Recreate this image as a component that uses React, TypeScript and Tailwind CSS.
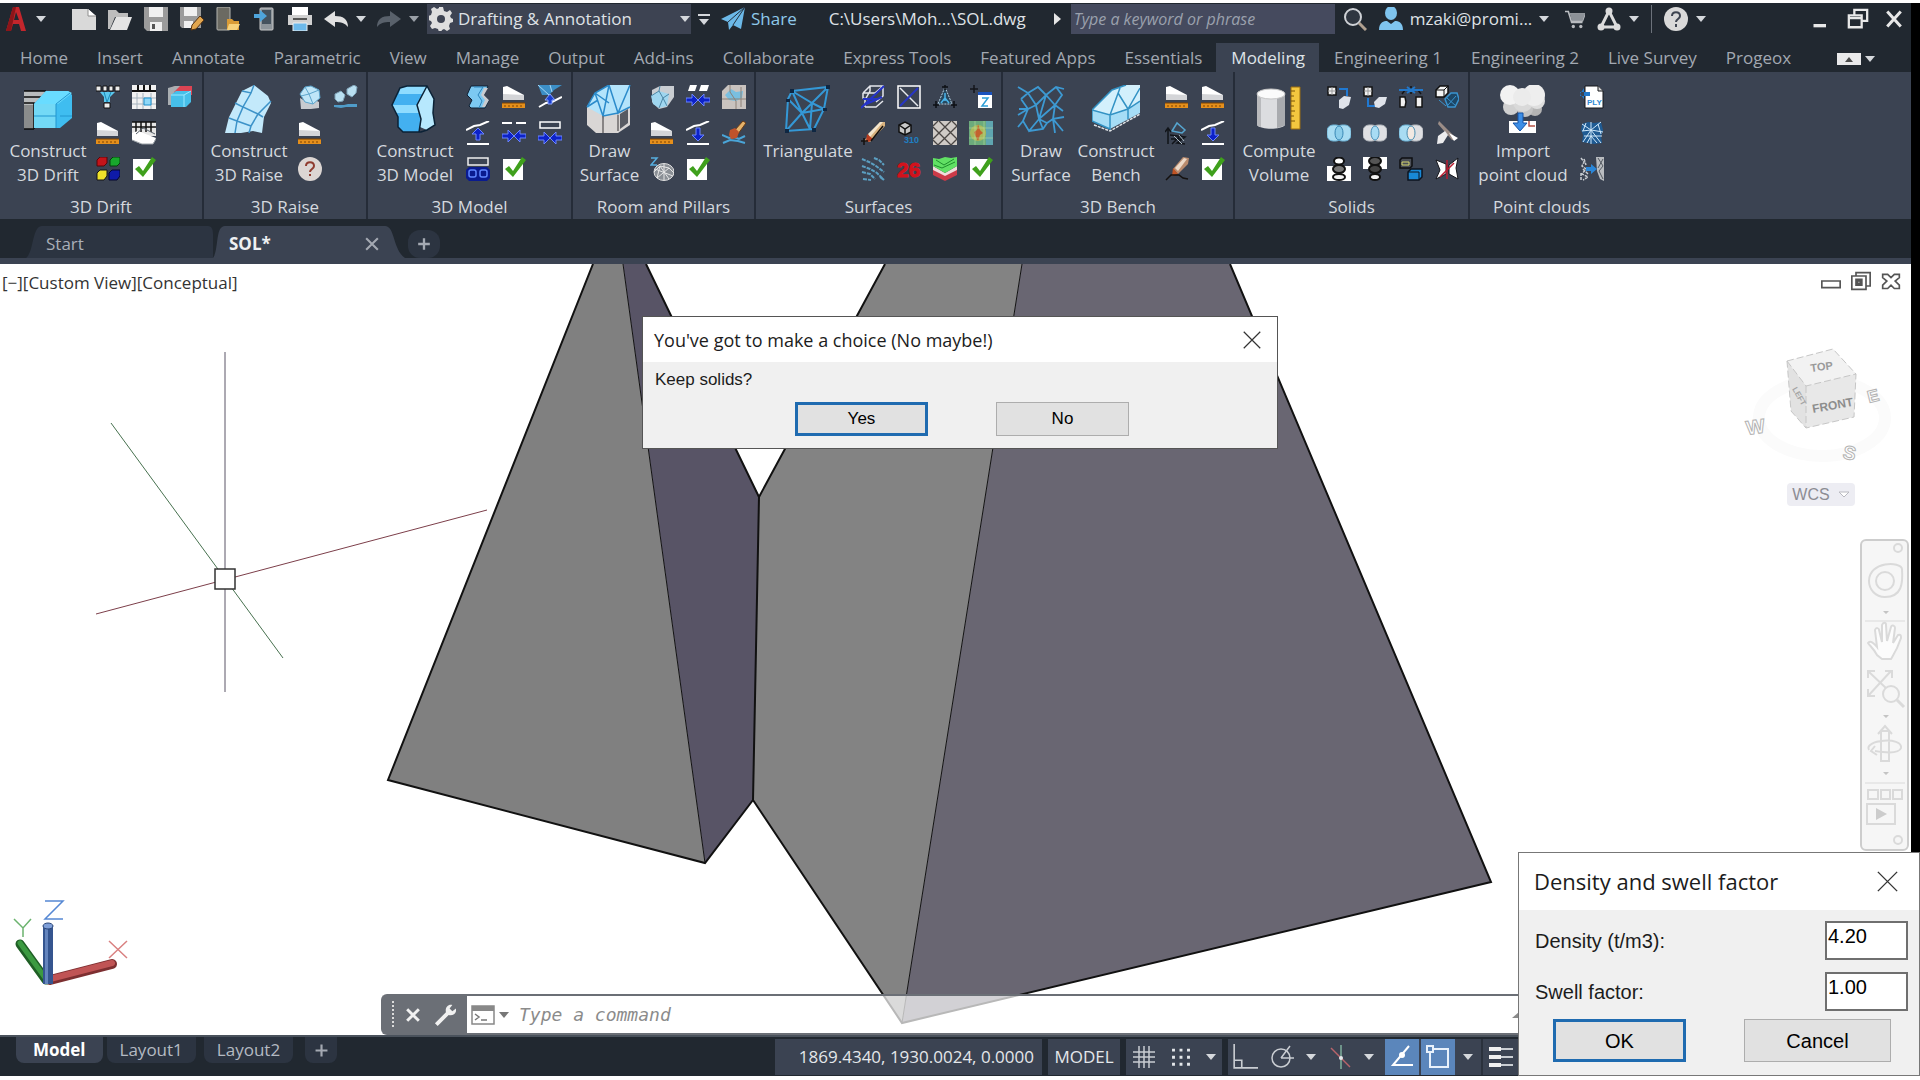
import type { ReactNode } from 'react';

const Svg = ({ children, size = 24, box = 24 }: { children: ReactNode; size?: number; box?: number }) => (
  <svg width={size} height={size} viewBox={`0 0 ${box} ${box}`} fill="none" aria-hidden="true" className="block shrink-0">
    {children}
  </svg>
);

const Caret = ({ className = 'text-[#d5d8dc]' }: { className?: string }) => (
  <svg width="10" height="6" viewBox="0 0 10 6" aria-hidden="true" className={`block shrink-0 ${className}`}>
    <path d="M0 0h10L5 6z" fill="currentColor" />
  </svg>
);

/* ---------- small ribbon icons (24 x 24) ---------- */

const eraser = (
  <>
    <path d="M1 2l4-1 17 9v5H1z" fill="#fff" />
    <path d="M1 9l21 1v5H1z" fill="#d4d5d8" />
    <path d="M0 18h23v5H0z" fill="#e58f1b" />
    <path d="M0 18h23M3 20v2M7 20v2M11 20v2M15 20v2M19 20v2" stroke="#7a4305" />
  </>
);

const check = (
  <>
    <path d="M1 2h20v21H1z" fill="#fff" />
    <path d="M3 12l4-3 4 5L20 0l4 3-13 17z" fill="#3fa01c" />
  </>
);

const arrowUp = (
  <>
    <path d="M0 9l8-4 6-1 9-4M1 23h22" stroke="#fff" strokeWidth="2" />
    <path d="M12 7l6 6h-4v6h-4v-6H6z" fill="#0d22c8" stroke="#6c86ff" />
  </>
);

const arrowDown = (
  <>
    <path d="M0 9l8-4 6-1 9-4M1 23h22" stroke="#fff" strokeWidth="2" />
    <path d="M12 20l6-6h-4V7h-4v7H6z" fill="#0d22c8" stroke="#6c86ff" />
  </>
);

const arrowsIn = (
  <path d="M12 15l-6-6v4H0v4h6v4zM12 15l6-6v4h6v4h-6v4z" fill="#0d22c8" stroke="#6c86ff" />
);

const icons: Record<string, ReactNode> = {
  eraser,
  check,
  arrowUp,
  arrowDown,
  tee: (
    <>
      <path d="M0 1h5v5H0zM7 1h4v5H7zM13 1h4v5h-4zM19 1h5v5h-5zM8 18h6v5H8z" fill="#ececec" stroke="#111" />
      <path d="M4 7h15l-5 5v5H8v-5z" fill="#5cc9ee" />
      <path d="M8 7l3 10 4-10" stroke="#1d89b6" />
    </>
  ),
  grid: (
    <>
      <path d="M0 0h24v24H0z" fill="#f1f1f1" />
      <path d="M0 6h24M6 0v6M12 0v6M18 0v6" stroke="#111" strokeWidth="2" />
      <path d="M0 13h24M0 19h24M5 8v16M11 8v16M19 8v16" stroke="#a5b2bd" />
      <path d="M12 13h7v7h-7z" fill="#8fd8f7" stroke="#1c90cc" />
    </>
  ),
  boxRed: (
    <>
      <path d="M0 4l7-3h17v9H0z" fill="#dc4453" />
      <path d="M0 3l7-2h5L6 7v13H0z" fill="#a9aeb2" />
      <path d="M3 10l5-4h15v11l-5 5H3z" fill="#46bfe9" />
      <path d="M3 10h13v12M16 10l7-4" stroke="#9be8ff" />
    </>
  ),
  gridEraser: (
    <>
      <path d="M0 1h24v14H0z" fill="#e6e6e6" />
      <path d="M0 6h24M4 1v10M9 1v10M14 1v10M19 1v10M0 1h24" stroke="#111" strokeWidth="1.5" />
      <path d="M0 12l6-2 18 7-3 6H9L0 19z" fill="#fff" />
      <path d="M4 13l7-6 12 6" stroke="#59626c" />
      <path d="M0 19l10 4h11l3-5" stroke="#9aa0a6" />
    </>
  ),
  cubes: (
    <>
      <path d="M1 3l3-3h7v6L8 9H1z" fill="#c4141a" stroke="#5b0508" />
      <path d="M14 3l3-3h7v6l-3 3h-7z" fill="#18a82c" stroke="#053f0c" />
      <path d="M1 16l3-3h7v6l-3 4H1z" fill="#f0e22a" stroke="#141414" />
      <path d="M13 16l3-3h8v6l-3 4h-8z" fill="#0e1aa8" stroke="#04072f" />
    </>
  ),
  crystal: (
    <>
      <path d="M2 13l7 4 8-2 4 2v6l-8 1H3z" fill="#c8cbd0" />
      <path d="M2 9l5-7 6-1 8 4 1 8-7 6-8-2z" fill="#bfe6f8" stroke="#5da5cc" />
      <path d="M7 2l4 7 10-4M11 9l-8 2M11 9l4 10" stroke="#5da5cc" />
    </>
  ),
  rocks: (
    <>
      <path d="M1 9l6-3 4 4-2 6-5 1-3-3zM13 4l7-4 3 2-1 6-4 4-5-3z" fill="#b9dff1" stroke="#7fa3b8" />
      <path d="M0 20h10l4-1h9v3H12l-5 1-7-1z" fill="#4f9cc9" />
    </>
  ),
  help: (
    <>
      <circle cx="12" cy="12" r="12" fill="#dcd6d3" />
      <path d="M8 9c0-5 8-5 8 0 0 3-4 3-4 6M12 17v2" stroke="#8f3b2e" strokeWidth="2" />
    </>
  ),
  wave: (
    <>
      <path d="M5 1h17l-4 9 5 5-4 8H5l-2-2 3-6-5-5z" fill="#7cc9f2" stroke="#0d1f33" />
      <path d="M8 2h9l-5 8 4 6-3 7" stroke="#2c84bb" />
      <path d="M18 3h4l-4 7 5 5-4 7h-3l3-7-4-5z" fill="#c9ccd0" />
    </>
  ),
  terrainUp: (
    <>
      <path d="M0 0h24l-8 5-5 5H4z" fill="#3c8fc7" />
      <path d="M0 0l11 10M12 0l2 7" stroke="#a8d8f5" />
      <path d="M1 22l7-4 6-1 10-5" stroke="#fff" strokeWidth="2" />
      <path d="M12 9l5 6h-3v4h-4v-4H7z" fill="#1b3fd0" stroke="#8aa4ff" />
    </>
  ),
  arrowsIn: (
    <>
      <path d="M0 2h10M14 2h10" stroke="#fff" strokeWidth="2" />
      {arrowsIn}
    </>
  ),
  arrowsInBox: (
    <>
      <path d="M2 1h20v6H2z" stroke="#fff" strokeWidth="1.5" />
      <g transform="translate(0 2)">{arrowsIn}</g>
    </>
  ),
  linked: (
    <>
      <path d="M2 1h20v7H2z" stroke="#eee" strokeWidth="1.5" />
      <path d="M3 10h18l3 3v8l-3 3H3l-3-3v-8z" fill="#0a1b8f" />
      <rect x="3" y="13" width="7" height="7" rx="2" stroke="#5f86ff" strokeWidth="1.5" />
      <rect x="14" y="13" width="7" height="7" rx="2" stroke="#5f86ff" strokeWidth="1.5" />
    </>
  ),
  rock: (
    <>
      <path d="M2 5l8-4h14v11l-7 10-8 2-7-7z" fill="#c9cdd2" />
      <path d="M1 11l8-5 10 3-2 12-8 2-6-4z" fill="#9fd6ef" />
      <path d="M1 11l8-5 4 7 6-4M13 13l-4 10M13 13l4 8M10 1l-1 5" stroke="#4d87a6" />
    </>
  ),
  patches: (
    <>
      <path d="M2 6l2-6h7L9 6zM13 6l2-6h8l-2 6z" fill="#fff" />
      {arrowsIn}
    </>
  ),
  rockTile: (
    <>
      <path d="M0 6l6-6h18v24H0z" fill="#c9c3bf" />
      <path d="M3 10l6-6 5 3 7-1-1 7-6 3-7-1z" fill="#79bfe0" />
      <path d="M8 0v7l6 9v8M0 14h24M19 2v20" stroke="#8e8279" />
    </>
  ),
  brush: (
    <>
      <path d="M12 10L21 0l3 2-8 11z" fill="#e6b36a" stroke="#6a3b15" />
      <path d="M0 14l7 3 5-1 5 2 6-3M1 22l7-3 8 1 7 2" stroke="#4aa5d8" strokeWidth="2" />
      <path d="M8 9l5-2 4 4-2 6-6 1-2-4z" fill="#c0532a" />
    </>
  ),
  globeZ: (
    <>
      <ellipse cx="14" cy="15" rx="10" ry="8.5" fill="#8a8f95" stroke="#e0e0e0" />
      <path d="M4 15l6-6 9 2 5 5M7 21l3-12 9 13M19 11l-12 10M14 7v16M5 12l18 7" stroke="#e7e7e7" />
      <path d="M1 1h6L1 8h6" stroke="#57aede" strokeWidth="1.5" />
    </>
  ),
  cubeLines: (
    <>
      <path d="M2 8l7-7h13v10l-7 6M2 8h12l8-7M2 8v5l6 2M4 22h11l7-6M9 1v5l-5 9v7" stroke="#e4e6ec" strokeWidth="1.5" />
      <path d="M0 23L23 1M2 14h14M3 20l18-8" stroke="#2433c9" strokeWidth="2" />
    </>
  ),
  boxX: (
    <>
      <path d="M1 1h22v22H1z" stroke="#fff" strokeWidth="1.5" />
      <path d="M3 3l18 18" stroke="#e8ebf0" strokeWidth="1.5" />
      <path d="M21 3L3 21" stroke="#2636c4" strokeWidth="2" />
    </>
  ),
  cone: (
    <>
      <path d="M12 2l7 17H5z" fill="#27475d" stroke="#b7d3e4" strokeDasharray="2 1" />
      <path d="M12 8v8M8 18l4-5 4 5" stroke="#4bb4ea" strokeWidth="1.5" />
      <path d="M12 0v5M9 2h6M3 16v7M0 20h6M21 16v7M18 20h6" stroke="#0d0f14" strokeWidth="1.5" />
    </>
  ),
  zdoc: (
    <>
      <path d="M5 0v8M1 4h8" stroke="#14161b" strokeWidth="1.5" />
      <path d="M9 7h14v16H9z" fill="#fff" />
      <path d="M9 7h14v3H9z" fill="#1b53bd" />
      <path d="M13 13h6l-6 8h6" stroke="#2f9fd6" strokeWidth="1.5" />
    </>
  ),
  pencil: (
    <>
      <path d="M3 20L19 1h5v4L9 21z" fill="#d8b27e" />
      <path d="M7 13L19 1h3L9 16z" fill="#f4e6cd" />
      <path d="M5 20l1-7 6 5-4 3z" fill="#b83c20" />
      <path d="M3 17v7M0 20h7M22 5L10 20" stroke="#15110f" strokeWidth="1.5" />
    </>
  ),
  cube310: (
    <>
      <path d="M2 4l6-3 6 3v7l-6 3-6-3z" fill="#c8c8c8" stroke="#111" strokeWidth="1.5" />
      <path d="M2 4l6 4 6-4M8 8v6" stroke="#111" strokeWidth="1.5" />
      <text x="7" y="22" fontSize="9" fontWeight="700" fill="#1f7fc4" fontFamily="Liberation Sans, sans-serif">310</text>
    </>
  ),
  hatch: (
    <>
      <path d="M0 0h24v24H0z" fill="#cfcac6" />
      <path d="M0 5l5-5M0 18L18 0M5 24L24 5M18 24l6-6M0 6l18 18M6 0l18 18M0 19l5 5M19 0l5 5" stroke="#4a4644" strokeWidth="1.3" />
    </>
  ),
  heatmap: (
    <>
      <path d="M0 0h24v24H0z" fill="#6cab7c" />
      <path d="M17 0h7v24h-7z" fill="#5fa5b0" />
      <circle cx="9" cy="12" r="8" fill="#a9b95c" />
      <path d="M9 3l2 6 3 3-3 2-2 6-3-6-1-3 3-2z" fill="#c4622e" />
      <path d="M0 7h24M0 17h24M6 0v24M15 0v24" stroke="#bfe3a0" strokeOpacity=".5" />
    </>
  ),
  contours: (
    <path
      d="M1 2l7 3 7 4 8 6M1 9l8 3 7 4 7 7M13 1l5 2 5 5M1 15l8 2 5 5M2 22l8 1M19 20l4 3"
      stroke="#5b9fc2"
      strokeWidth="2"
      strokeDasharray="4 1"
    />
  ),
  number26: (
    <text x="0" y="20" fontSize="21" fontWeight="700" fill="#d3121c" stroke="#d3121c" strokeWidth="1" fontFamily="Liberation Sans, sans-serif">26</text>
  ),
  layers: (
    <>
      <path d="M0 11l12 6 12-6v7l-12 6-12-6z" fill="#cc3a48" />
      <path d="M0 9l12 7 12-7v4l-12 6-12-6z" fill="#f1dcdc" />
      <path d="M0 1l6 1 6-2 6 1 6-1v9l-12 7L0 9z" fill="#61e064" />
      <path d="M3 3l8 5 10-6M1 8l8 3 13-6" stroke="#1f8d2d" />
    </>
  ),
  bench: (
    <>
      <path d="M7 10l5-8 8 7-3 3z" stroke="#56a5cf" strokeWidth="1.5" />
      <path d="M3 8v15M0 11l3-4 3 4M5 14l15 2-8 6 8 1M7 23l9-9M6 18h12" stroke="#111419" strokeWidth="1.5" />
      <path d="M9 15l8 8M14 14l5 6" stroke="#aebbc4" />
    </>
  ),
  pencil2: (
    <>
      <path d="M8 12L18 0l6 1-1 6-10 10z" fill="#b98b6e" />
      <path d="M10 11l9-10 3 1-9 12z" fill="#ecd9c8" />
      <path d="M8 11l5 6-6 2z" fill="#c25424" />
      <path d="M1 23l5-5 8 0 4 3 5 1" stroke="#14110f" strokeWidth="1.5" />
    </>
  ),
  cubeToSolid: (
    <>
      <path d="M1 2h8v8H1z" fill="#f0f0f0" stroke="#141414" strokeWidth="1.5" />
      <path d="M5 2v8M1 6h8" stroke="#999" />
      <path d="M12 4h8v7" stroke="#2079d2" strokeWidth="2" />
      <path d="M12 15l5-4 7 1-2 8-6 4-4-1z" fill="#dfe3ea" />
    </>
  ),
  cubeDown: (
    <>
      <path d="M1 2h8v9H1z" fill="#f0f0f0" stroke="#141414" strokeWidth="1.5" />
      <path d="M5 2v9M1 6h8" stroke="#999" />
      <path d="M5 13v8h7" stroke="#2079d2" strokeWidth="2" />
      <path d="M11 17l5-5 8 0-2 7-6 4-4-1z" fill="#dfe3ea" />
    </>
  ),
  pull: (
    <>
      <path d="M1 12h5l1 5-1 5H1zM17 12h6v10h-6z" fill="#f0f0f0" stroke="#141414" strokeWidth="1.5" />
      <path d="M3 9l3-4h13l3 4M12 1v8" stroke="#141414" strokeWidth="1.5" />
      <path d="M0 5h24M8 2l4 3-4 3M16 2l-4 3 4 3" stroke="#2377c8" strokeWidth="2" />
    </>
  ),
  cubeSphere: (
    <>
      <path d="M10 14l6-6h6l2 6-4 8h-7z" fill="#1d4766" stroke="#3a94cf" strokeWidth="1.5" />
      <path d="M12 13l9 8M21 11l-8 9M4 15l7 6" stroke="#3a94cf" />
      <path d="M1 5l4-4h8v7l-4 4H1z" fill="#f4f4f4" stroke="#111" strokeWidth="1.5" />
      <path d="M1 5h8v7M9 5l4-4" stroke="#111" />
    </>
  ),
  union: (
    <>
      <rect x="0" y="4" width="15" height="16" rx="6" fill="#a9dcf2" stroke="#6cb3d6" />
      <rect x="9" y="4" width="15" height="16" rx="6" fill="#a9dcf2" stroke="#6cb3d6" />
      <ellipse cx="12" cy="12" rx="4" ry="7" fill="#8ccdea" stroke="#3b89b5" />
    </>
  ),
  intersect: (
    <>
      <rect x="0" y="4" width="15" height="16" rx="6" fill="#dfe0e3" stroke="#b5b9bf" />
      <rect x="9" y="4" width="15" height="16" rx="6" fill="#dfe0e3" stroke="#b5b9bf" />
      <ellipse cx="12" cy="12" rx="4" ry="7" fill="#a8dcf4" stroke="#4d93ba" />
    </>
  ),
  subtract: (
    <>
      <rect x="0" y="4" width="15" height="16" rx="6" fill="#a9dcf2" stroke="#6cb3d6" />
      <rect x="9" y="4" width="15" height="16" rx="6" fill="#dfe0e3" stroke="#b5b9bf" />
      <ellipse cx="12" cy="12" rx="4" ry="7" fill="#f2e9e2" stroke="#4a8fb3" />
    </>
  ),
  slice: (
    <>
      <path d="M4 0l18 18-5 1L3 3z" fill="#9b8d87" />
      <path d="M3 15l7-5 3 4-5 8-6 1z" fill="#ececee" />
      <path d="M14 12l9 5-4 3z" fill="#fff" />
    </>
  ),
  stackA: (
    <>
      <path d="M0 9h24v15H0z" fill="#fff" />
      <ellipse cx="12" cy="4" rx="5" ry="3.5" fill="#fff" stroke="#111" strokeWidth="2" />
      <ellipse cx="12" cy="12" rx="6" ry="4" fill="#777" stroke="#111" strokeWidth="2" />
      <ellipse cx="12" cy="20" rx="6" ry="3" fill="#f4f4f4" stroke="#111" strokeWidth="2" />
    </>
  ),
  stackB: (
    <>
      <path d="M0 0h24v12H0z" fill="#fff" />
      <ellipse cx="12" cy="4" rx="6" ry="4" fill="#555" stroke="#111" strokeWidth="2" />
      <ellipse cx="12" cy="12" rx="6" ry="4" fill="#444" stroke="#111" strokeWidth="2" />
      <ellipse cx="12" cy="20" rx="5" ry="3" fill="#f4f4f4" stroke="#111" strokeWidth="2" />
    </>
  ),
  boxes: (
    <>
      <path d="M1 3l2-2h10v8l-2 2H1z" fill="#4b4f57" stroke="#0e0f12" strokeWidth="1.5" />
      <path d="M3 5h7v3H3z" stroke="#d6d66e" />
      <path d="M9 15l3-3h11v8l-3 3H9z" fill="#1888d6" stroke="#0c1420" strokeWidth="1.5" />
      <path d="M9 15h11v8" stroke="#0c1420" />
    </>
  ),
  flip: (
    <>
      <path d="M1 3l10 4v10L1 22l4-9zM23 1l-9 7v9l9 5-2-11z" fill="#fff" stroke="#14151a" />
      <path d="M12 3v19M5 20L19 6" stroke="#b81d31" strokeWidth="1.5" />
    </>
  ),
  ply: (
    <>
      <path d="M5 1h13l5 5v17H5z" fill="#fff" stroke="#15171b" />
      <path d="M18 1v5h5" fill="#d6d6d6" stroke="#15171b" />
      <path d="M0 7h10v4H0zM4 3L0 9l4 5z" fill="#2378c9" />
      <text x="7" y="20" fontSize="8" fontWeight="700" fill="#2f8bd4" fontFamily="Liberation Sans, sans-serif">PLY</text>
    </>
  ),
  mesh: (
    <>
      <path d="M2 3l6-2 6 1 7-1 2 8-2 6 1 7-8 1-6-1-6-1 1-7-2-5z" fill="#1f5b93" />
      <path d="M2 3l9 6 10-8M3 21l8-12 10 13M2 10l9-1 12 2M11 1v22M4 15h18M6 2l-3 8M18 3l3 10M7 22l4-7 6 7" stroke="#cfe8fa" />
    </>
  ),
  compare: (
    <>
      <path d="M16 0h8v24l-4-2-3-8z" fill="#b9bcc0" />
      <path d="M18 1l5 8-4 5 4 8M23 2l-5 9" stroke="#555b63" />
      <path d="M1 1l3 4-2 4 4 3-4 5 6 3-5 3M4 2l2 6M3 12l5 5M1 16v7" stroke="#c9cdd2" strokeWidth="1.5" strokeDasharray="3 1" />
      <path d="M6 10h5V7l6 5-6 5v-3H6z" fill="#2a86d8" />
    </>
  ),
};

/* ---------- large ribbon icons (48 x 48) ---------- */

const bigIcons: Record<string, ReactNode> = {
  drift: (
    <>
      <path d="M0 6h24L10 19v25H0z" fill="#b9bcbd" />
      <path d="M0 20h10v24H0z" fill="#8a8c8c" />
      <path d="M0 6h22M0 12h18M0 18h10v26M0 44h10" stroke="#0b0b0b" strokeWidth="1.5" />
      <path d="M10 19L22 6h22l4 4v23L36 43H10z" fill="#3fbdf0" />
      <path d="M10 19L22 6h22l4 2-14 11z" fill="#69dcff" />
      <path d="M10 19h22v24H10z" fill="#73d9f6" />
      <path d="M32 19v24M32 19L46 8M10 31h22M36 31h12" stroke="#2396cf" />
    </>
  ),
  raise: (
    <>
      <path d="M10 20L17 6l12-6 14 11 3 7-7 14-2 16-9-2-12 2H0l4-16z" fill="#c3e9fb" />
      <path d="M17 6l9 2 3-8M26 8l-8 14 15 7 13-13M10 18l8 4-6 14 14 5 7-12M4 33l8 3-2 12M26 41l-2 7M38 32l-5-3" stroke="#3d93c9" strokeWidth="1.5" />
    </>
  ),
  model: (
    <>
      <path d="M9 3l7-2h20l-10 19 4 14-2 13H12L7 42V32L1 20z" fill="#43b0f0" />
      <path d="M9 3l7-2h20l-4 8H8zM1 20h25l3 8H5z" fill="#8fdcff" />
      <path d="M36 1l7 13-1 14 2 12-8 5-7-3 1-8-4-14z" fill="#b7e8fd" />
      <path d="M9 3l7-2h20l7 13-1 14 2 12-8 5-6 2H12L7 42V32L1 20zM36 1L26 20l4 14-2 13" stroke="#0b2236" strokeWidth="1.5" />
    </>
  ),
  room: (
    <>
      <path d="M1 20L16 30l14-6L44 6v34L32 48H10L1 40z" fill="#d9d6d5" />
      <path d="M1 22L9 8l14-8h21v22l-12 6-15 3z" fill="#b4e4fb" />
      <path d="M1 22L9 8l14-8M9 8l8 23 6-31 9 28L44 0M1 22l11-7M9 8l14 10M17 31l15-3 12-6" stroke="#2b8bcb" strokeWidth="1.5" />
      <path d="M17 31v17M32 30v16" stroke="#6c6a6b" strokeWidth="1.5" />
      <path d="M34 29l8-5v14l-8 6z" fill="#575a62" />
    </>
  ),
  triangulate: (
    <>
      <path d="M8 6l36-4-4 22-10 20-28 2L4 14zM8 6l20 12L44 2M4 14l14 14L28 18l-2 26M18 28L2 46M18 28l22-4M18 28l8 16M8 6l10 22M28 18l12 6" stroke="#3498d6" strokeWidth="2" />
      <path d="M6 4h4v4H6zM42 0h4v4h-4zM1 44h4v4H1zM28 43h4v4h-4zM2 14h4v3H2zM39 23h4v3h-4z" fill="#0f2742" />
    </>
  ),
  net: (
    <path
      d="M1 2l10 6 10-6 8 8 10-8 8 2M4 14l7-6 8 12 10-10 9 10 7-10-6-8M1 30l10-6 8-4 3 14 16-14-2 14 11-2M11 24l-5 12 6 10 10-12 8 4 6-4 10 12M1 42l5-6M12 46l14-2 4-6M36 34l2 14M4 14l7 10M29 10l-7 24M22 34l4 10M2 24l9 0M45 10l-7 10 8 6"
      stroke="#3d99d2"
      strokeWidth="1.8"
    />
  ),
  bench: (
    <>
      <path d="M0 25L20 5 34 0h14v28L18 44 0 36z" fill="#a6ddf6" />
      <path d="M0 25L20 5 34 0h14v16l-12 8-18 6z" fill="#d3f0fc" />
      <path d="M0 25L20 5 34 0M0 25l18 5 18-6 12-8M0 25v11l18 8V30M36 24v10M28 3l-10 27M26 8l10 16L48 3" stroke="#3292c4" strokeWidth="1.5" />
      <path d="M2 40l16 6 30-17" stroke="#dfe3e6" strokeWidth="1.5" strokeDasharray="3 1" />
    </>
  ),
  volume: (
    <>
      <path d="M2 10v30c4 5 24 5 28 0V10z" fill="#dcdde0" />
      <path d="M22 13v30c4-1 7-2 8-3V10z" fill="#a9abaf" />
      <path d="M6 13v29c-2 0-3-1-4-2V10z" fill="#b9babd" />
      <ellipse cx="16" cy="9" rx="14" ry="5" fill="#fbfbfb" stroke="#c6c6c6" />
      <path d="M36 2h9v42h-9z" fill="#f3c73f" stroke="#9c6f10" />
      <path d="M36 6h4M36 11h3M36 16h4M36 21h3M36 26h4M36 31h3M36 36h4" stroke="#7b5608" />
    </>
  ),
  cloud: (
    <>
      <path d="M10 36h27v12H10z" fill="#fff" />
      <path d="M30 36v5h6" stroke="#b55347" strokeWidth="1.5" />
      <circle cx="36" cy="24" r="7" fill="#b4b4b4" />
      <circle cx="26" cy="24" r="8" fill="#c4c4c4" />
      <circle cx="12" cy="22" r="8" fill="#d0d0d0" />
      <circle cx="24" cy="17" r="10" fill="#d9d9d9" />
      <circle cx="38" cy="16" r="8" fill="#dedede" />
      <circle cx="11" cy="10" r="10" fill="#f2f2f2" />
      <circle cx="35" cy="10" r="11" fill="#eeeeee" />
      <circle cx="23" cy="12" r="9" fill="#ebebeb" />
      <path d="M19 28h5v10h4l-7 8-7-8h5z" fill="#3c8ee6" stroke="#1554a8" />
    </>
  ),
};

type Panel = {
  title: string;
  width: string;
  big: { icon: string; lines: string[]; width: string }[];
  rows: string[][];
  cols: string;
};

const panels: Panel[] = [
  {
    title: '3D Drift',
    width: 'w-[204px]',
    big: [{ icon: 'drift', lines: ['Construct', '3D Drift'], width: 'w-[84px] pl-1' }],
    cols: 'grid-cols-[24px_24px_24px]',
    rows: [['tee', 'grid', 'boxRed'], ['eraser', 'gridEraser', ''], ['cubes', 'check', '']],
  },
  {
    title: '3D Raise',
    width: 'w-[164px]',
    big: [{ icon: 'raise', lines: ['Construct', '3D Raise'], width: 'w-[82px]' }],
    cols: 'grid-cols-[24px_24px]',
    rows: [['crystal', 'rocks'], ['eraser', ''], ['help', '']],
  },
  {
    title: '3D Model',
    width: 'w-[205px]',
    big: [{ icon: 'model', lines: ['Construct', '3D Model'], width: 'w-[86px]' }],
    cols: 'grid-cols-[24px_24px_24px]',
    rows: [['wave', 'eraser', 'terrainUp'], ['arrowUp', 'arrowsIn', 'arrowsInBox'], ['linked', 'check', '']],
  },
  {
    title: 'Room and Pillars',
    width: 'w-[183px]',
    big: [{ icon: 'room', lines: ['Draw', 'Surface'], width: 'w-[65px]' }],
    cols: 'grid-cols-[24px_24px_24px]',
    rows: [['rock', 'patches', 'rockTile'], ['eraser', 'arrowDown', 'brush'], ['globeZ', 'check', '']],
  },
  {
    title: 'Surfaces',
    width: 'w-[247px]',
    big: [{ icon: 'triangulate', lines: ['Triangulate'], width: 'w-[93px] pl-[3px]' }],
    cols: 'grid-cols-[24px_24px_24px_24px]',
    rows: [['cubeLines', 'boxX', 'cone', 'zdoc'], ['pencil', 'cube310', 'hatch', 'heatmap'], ['contours', 'number26', 'layers', 'check']],
  },
  {
    title: '3D Bench',
    width: 'w-[232px]',
    big: [
      { icon: 'net', lines: ['Draw', 'Surface'], width: 'w-[68px]' },
      { icon: 'bench', lines: ['Construct', 'Bench'], width: 'w-[82px]' },
    ],
    cols: 'grid-cols-[24px_24px]',
    rows: [['eraser', 'eraser'], ['bench', 'arrowDown'], ['pencil2', 'check']],
  },
  {
    title: 'Solids',
    width: 'w-[235px]',
    big: [{ icon: 'volume', lines: ['Compute', 'Volume'], width: 'w-[80px]' }],
    cols: 'grid-cols-[24px_24px_24px_24px]',
    rows: [['cubeToSolid', 'cubeDown', 'pull', 'cubeSphere'], ['union', 'intersect', 'subtract', 'slice'], ['stackA', 'stackB', 'boxes', 'flip']],
  },
  {
    title: 'Point clouds',
    width: 'w-[143px]',
    big: [{ icon: 'cloud', lines: ['Import', 'point cloud'], width: 'w-[98px]' }],
    cols: 'grid-cols-[24px]',
    rows: [['ply'], ['mesh'], ['compare']],
  },
];

const ribbonTabs = [
  'Home', 'Insert', 'Annotate', 'Parametric', 'View', 'Manage', 'Output', 'Add-ins', 'Collaborate', 'Express Tools',
  'Featured Apps', 'Essentials', 'Modeling', 'Engineering 1', 'Engineering 2', 'Live Survey', 'Progeox',
];

const RibbonPanel = ({ panel }: { panel: Panel }) => (
  <section className={`flex shrink-0 flex-col pt-[13px] ${panel.width} ${panel.title === 'Point clouds' ? '' : 'border-r-2 border-[#252c38]'}`}>
    <div className="flex flex-1 gap-2 pl-1">
      <div className="flex">
        {panel.big.map((tool) => (
          <button key={tool.icon} type="button" className={`flex flex-col items-center whitespace-nowrap leading-6 ${tool.width}`}>
            <span className="mb-[6px]">
              <Svg size={48} box={48}>{bigIcons[tool.icon]}</Svg>
            </span>
            {tool.lines.map((line) => (
              <span key={line}>{line}</span>
            ))}
          </button>
        ))}
      </div>
      <div className={`grid content-start gap-3 ${panel.cols}`}>
        {panel.rows.flat().map((icon, index) =>
          icon ? (
            <button key={index} type="button" aria-label={icon} className="h-6 w-6">
              <Svg>{icons[icon]}</Svg>
            </button>
          ) : (
            <span key={index} />
          ),
        )}
      </div>
    </div>
    <h2 className="pb-[2px] text-center leading-5">{panel.title}</h2>
  </section>
);

const TitleBar = () => (
  <header className="flex h-8 items-center text-[#dfe2e6]">
    <button type="button" aria-label="Application menu" className="ml-1 flex items-center gap-2">
      <Svg size={24}>
        <path d="M2 24L9 0h6l7 24h-5l-2-7H9l-2 7zM10 13h5L12 5z" fill="#c3262c" />
        <path d="M9 0h3L7 24H2z" fill="#8c1519" />
      </Svg>
      <Caret />
    </button>
    <div className="ml-[26px] flex items-center gap-3">
      <button type="button" aria-label="New">
        <Svg><path d="M0 2h16l8 7v14H0z" fill="#d9d9d9" /><path d="M16 2v7h8" fill="#fff" stroke="#8e8e8e" /></Svg>
      </button>
      <button type="button" aria-label="Open">
        <Svg><path d="M0 3h8l3 3h9v4H7L2 22H0z" fill="#bdbdbd" /><path d="M8 10h16l-5 13H2z" fill="#e4e4e4" /></Svg>
      </button>
      <button type="button" aria-label="Save">
        <Svg><path d="M0 0h24v24H3l-3-3z" fill="#9b9b9b" /><path d="M5 0h14v10H5zM6 15h12v9H6z" fill="#f0f0f0" /><path d="M8 17h3v5H8z" fill="#555" /></Svg>
      </button>
      <button type="button" aria-label="Save as">
        <Svg><path d="M0 0h21v21H2l-2-2z" fill="#9b9b9b" /><path d="M4 0h13v9H4zM4 14h9v7H4z" fill="#f0f0f0" /><path d="M11 23l1-5 8-9 4 4-8 9z" fill="#e2a64e" stroke="#573312" /></Svg>
      </button>
      <button type="button" aria-label="Open from mobile">
        <Svg><rect x="1" y="0" width="13" height="23" rx="1" fill="#6b6a62" stroke="#b5b5b0" /><path d="M11 12h5l2 2h5v9H11z" fill="#d99b36" /><path d="M13 17h11l-3 6H11z" fill="#f7d27c" /></Svg>
      </button>
      <button type="button" aria-label="Save to mobile">
        <Svg><rect x="8" y="1" width="13" height="22" rx="1" fill="#8e959b" stroke="#c9c9c9" /><path d="M10 3h9v14h-9z" fill="#45525e" /><path d="M2 7h6V3l7 6-7 6v-4H2z" fill="#4fa5dc" /></Svg>
      </button>
      <button type="button" aria-label="Print">
        <Svg><path d="M4 0h16v8H4z" fill="#fff" /><path d="M0 8h24v10H0z" fill="#d0d0d0" /><path d="M5 12h14" stroke="#555" strokeWidth="2" /><path d="M5 16h14v8H5z" fill="#6db9ea" stroke="#eee" /></Svg>
      </button>
    </div>
    <button type="button" aria-label="Undo" className="ml-3 flex items-center gap-2">
      <Svg><path d="M0 12L11 4v5c8 0 13 3 13 11-3-4-7-5-13-5v5z" fill="#e1e1e1" /></Svg>
      <Caret />
    </button>
    <button type="button" aria-label="Redo" className="ml-[11px] flex items-center gap-2 text-[#6c737c]">
      <Svg><path d="M24 12L13 4v5C5 9 0 12 0 20c3-4 7-5 13-5v5z" fill="#59616b" /></Svg>
      <Caret className="text-[#9aa0a7]" />
    </button>
    <div className="relative ml-2 h-[30px]">
      <span className="pointer-events-none absolute left-[2px] top-[3px]">
        <Svg>
          <path d="M10 0h4l1 4 3 1 3-2 2 3-2 3 1 2 2 1v3l-3 1-1 3 1 3-3 2-3-2-2 1-1 2h-2l-1-3-3-1-3 1-2-3 2-3-1-2-3-1v-4l3-1 1-3-1-3 3-2 3 2 2-1z" fill="#dedede" />
          <circle cx="12" cy="12" r="4" fill="#3d4352" />
        </Svg>
      </span>
      <select aria-label="Workspace" className="h-[30px] w-[264px] appearance-none bg-[#3d4352] pl-[31px] text-[#dfe2e6] outline-none">
        <option>Drafting &amp; Annotation</option>
      </select>
      <span className="pointer-events-none absolute right-px top-3"><Caret /></span>
    </div>
    <button type="button" aria-label="Customize toolbar" className="ml-[7px] flex w-3 flex-col items-center gap-[3px]">
      <span className="h-[2px] w-3 bg-[#d5d8dc]" />
      <Caret />
    </button>
    <button type="button" className="ml-[11px] flex items-center gap-[6px] text-[#8fc9ea]">
      <Svg><path d="M0 12L24 0l-4 22-8-4-4 5-1-8z" fill="#6cb9e8" /><path d="M7 15L24 0 12 18" stroke="#23303e" /></Svg>
      Share
    </button>
    <span className="ml-8">C:\Users\Moh...\SOL.dwg</span>
    <svg width="7" height="12" viewBox="0 0 7 12" aria-hidden="true" className="ml-7 shrink-0"><path d="M0 0l7 6-7 6z" fill="#e6e6e6" /></svg>
    <input
      type="search"
      aria-label="Search"
      placeholder="Type a keyword or phrase"
      className="ml-[10px] h-[30px] w-[264px] bg-[#454a5e] px-[3px] text-base italic outline-none placeholder:text-[#9ba1ad]"
    />
    <button type="button" aria-label="Find" className="ml-2">
      <Svg><circle cx="10" cy="10" r="8" stroke="#cfd2d6" strokeWidth="2" fill="#2f3640" /><path d="M16 16l7 7" stroke="#b0a090" strokeWidth="3" /></Svg>
    </button>
    <button type="button" className="ml-3 flex items-center gap-[7px]">
      <Svg><ellipse cx="12" cy="6" rx="6" ry="7" fill="#7fc4ee" /><path d="M0 23c0-8 5-9 8-9l4 3 4-3c3 0 8 1 8 9z" fill="#7fc4ee" /></Svg>
      mzaki@promi...
      <Caret />
    </button>
    <button type="button" aria-label="Cart" className="ml-4">
      <Svg size={20}><path d="M0 3h4l4 13h13M6 6h18l-3 8H8" stroke="#b9bcc0" strokeWidth="2" /><path d="M6 6h18l-3 8H8z" fill="#8d9298" /><circle cx="10" cy="21" r="2" fill="#b9bcc0" /><circle cx="19" cy="21" r="2" fill="#b9bcc0" /></Svg>
    </button>
    <button type="button" aria-label="Apps" className="ml-3 flex items-center gap-2">
      <Svg><path d="M12 4L4 20h16z" stroke="#dcdcdc" strokeWidth="3" /><circle cx="12" cy="4" r="3.5" fill="#dcdcdc" /><circle cx="4" cy="20" r="3.5" fill="#dcdcdc" /><circle cx="20" cy="20" r="3.5" fill="#dcdcdc" /></Svg>
      <Caret />
    </button>
    <span className="ml-3 h-7 w-px bg-[#6c727b]" />
    <button type="button" aria-label="Help" className="ml-3 flex items-center gap-2">
      <Svg><circle cx="12" cy="12" r="12" fill="#d9d9d9" /><path d="M8 9c0-5 8-5 8 0 0 3-4 3-4 6M12 17v3" stroke="#3d4450" strokeWidth="2" /></Svg>
      <Caret />
    </button>
    <div className="ml-auto flex items-center gap-4 pr-2">
      <button type="button" aria-label="Minimize"><Svg size={20}><path d="M3 20h15" stroke="#e8e8e8" strokeWidth="4" /></Svg></button>
      <button type="button" aria-label="Restore"><Svg size={22}><path d="M8 7V2h14v12h-5M2 8h14v13H2zM2 11h14" stroke="#e8e8e8" strokeWidth="2.5" /></Svg></button>
      <button type="button" aria-label="Close"><Svg size={18}><path d="M3 2l18 20M21 2L3 22" stroke="#e8e8e8" strokeWidth="4" /></Svg></button>
    </div>
  </header>
);

const RibbonTabs = () => (
  <nav className="flex h-[37px] items-end pl-[5px]">
    {ribbonTabs.map((tab) => (
      <button
        key={tab}
        type="button"
        className={`h-[29px] whitespace-nowrap pl-[15px] pr-[14px] ${tab === 'Modeling' ? 'bg-[#3b4352] text-[#dfe3e8]' : 'text-[#a3a9b2]'}`}
      >
        {tab}
      </button>
    ))}
    <button type="button" aria-label="Collapse ribbon" className="mb-[7px] ml-8 flex items-center gap-1">
      <span className="flex h-3 w-6 items-center justify-center bg-[#e9e9ea]">
        <svg width="8" height="5" viewBox="0 0 8 5" aria-hidden="true"><path d="M0 5h8L4 0z" fill="#4a4a4a" /></svg>
      </span>
      <Caret />
    </button>
  </nav>
);

const DocumentTabs = () => (
  <div className="flex h-[45px] items-end border-b-[6px] border-[#3b4352] pl-[26px]">
    <div className="relative flex h-8 w-[187px] items-center pl-5 pt-1 text-[#a9afb8]">
      <svg viewBox="0 0 187 32" preserveAspectRatio="none" aria-hidden="true" className="absolute inset-0 h-full w-full">
        <path d="M0 32C8 26 6 0 16 0h166c4 0 5 4 5 8v24z" fill="#2c3441" />
      </svg>
      <button type="button" className="relative">Start</button>
    </div>
    <div className="relative flex h-8 w-[192px] items-center justify-between pl-4 pr-[26px] pt-1">
      <svg viewBox="0 0 192 32" preserveAspectRatio="none" aria-hidden="true" className="absolute inset-0 h-full w-full">
        <path d="M0 32C6 24 2 0 12 0h160c10 0 8 24 20 32z" fill="#3b4352" />
      </svg>
      <button type="button" className="relative font-bold text-[#eef0f2]">SOL*</button>
      <button type="button" aria-label="Close SOL" className="relative">
        <Svg size={14}><path d="M2 2l20 20M22 2L2 22" stroke="#a4a9b2" strokeWidth="3.5" /></Svg>
      </button>
    </div>
    <button type="button" aria-label="New drawing" className="ml-[3px] flex h-7 w-8 items-center justify-center rounded-xl bg-[#2c3441]">
      <Svg size={14}><path d="M12 2v20M2 12h20" stroke="#a4a9b2" strokeWidth="4" /></Svg>
    </button>
  </div>
);

/* model space drawing: two overlapping pyramids, crosshair and UCS axes */
const Scene = () => (
  <svg viewBox="0 264 1911 771" preserveAspectRatio="xMidYMid slice" aria-hidden="true" className="absolute inset-0 h-full w-full">
    <path d="M593 264h30l82 599-317-83z" fill="#808080" />
    <path d="M623 264h23l113 233-6 303-48 63z" fill="#585466" />
    <path d="M885 264h137l-120 759-149-223 6-303z" fill="#838383" />
    <path d="M1022 264h208l261 618-589 141z" fill="#696672" />
    <g stroke="#111" fill="none" strokeWidth="2">
      <path d="M593 264L388 780l317 83 48-63 6-303-113-233M885 264L759 497M753 800l149 223 589-141-261-618" />
      <path d="M623 264l82 599M1022 264L902 1023" strokeWidth="1" />
    </g>
    <path d="M225 352v340" stroke="#5b5566" />
    <path d="M96 614l391-104" stroke="#7c3f4a" />
    <path d="M111 423l172 235" stroke="#47714f" />
    <path d="M215 569h20v20h-20z" fill="#fff" stroke="#333" strokeWidth="1.5" />

    <g strokeLinecap="round">
      <path d="M50 980l62-16" stroke="#7d2f31" strokeWidth="10" />
      <path d="M50 979l62-16" stroke="#c05455" strokeWidth="6" />
      <path d="M20 944l26 36" stroke="#1f5f25" strokeWidth="9" />
      <path d="M20 943l26 36" stroke="#3c9a41" strokeWidth="5" />
    </g>
    <path d="M43 926h10v58H43z" fill="#35558f" />
    <path d="M45 926h3v58h-3z" fill="#6585bd" />
    <ellipse cx="48" cy="926" rx="5" ry="3" fill="#7f9fd8" stroke="#2b4678" />
    <path d="M45 901h18l-18 18h18" stroke="#5688d4" strokeWidth="1.5" fill="none" />
    <path d="M14 919l9 9 8-9M23 928v9" stroke="#6bb36e" strokeWidth="1.5" fill="none" />
    <path d="M109 941l18 17M127 941l-18 17" stroke="#d98080" strokeWidth="1.5" fill="none" />
  </svg>
);

const ViewCube = () => (
  <div className="absolute right-[10px] top-[68px] flex w-[160px] flex-col items-center">
    <svg width="160" height="135" viewBox="0 0 160 135" aria-label="View cube" fontFamily="Liberation Sans, sans-serif">
      <ellipse cx="81" cy="86" rx="63" ry="38" fill="none" stroke="#fbfbfb" strokeWidth="12" />
      <path d="M46 29l46-12 23 25-50 12z" fill="#f2f2f2" />
      <path d="M46 29l19 25v42L50 79z" fill="#e2e2e2" />
      <path d="M65 54l50-12-2 43-48 11z" fill="#e8e8e8" />
      <path d="M46 29l46-12 23 25-2 43-48 11-15-17zM46 29l19 25 50-12M65 54v42" fill="none" stroke="#c6c6c6" strokeDasharray="7 3" />
      <text x="70" y="40" fontSize="11" fontWeight="700" fill="#9a9a9a" transform="rotate(-8 70 40)">TOP</text>
      <text x="72" y="81" fontSize="12" fontWeight="700" fill="#8d8d8d" transform="rotate(-10 72 81)">FRONT</text>
      <text x="51" y="57" fontSize="8" fontWeight="700" fill="#a5a5a5" transform="rotate(60 51 57)">LEFT</text>
      <g fill="#fff" stroke="#b3b3b3" fontWeight="700">
        <text x="6" y="103" fontSize="20" transform="rotate(-8 6 103)">W</text>
        <text x="128" y="71" fontSize="17" transform="rotate(-14 128 71)">E</text>
        <text x="101" y="126" fontSize="19" transform="rotate(12 101 126)">S</text>
      </g>
    </svg>
    <button type="button" className="mt-4 flex h-[23px] w-[68px] items-center justify-center gap-2 rounded bg-[#ededf3] font-['Liberation_Sans',sans-serif] text-base text-[#8c8c94]">
      WCS
      <svg width="12" height="7" viewBox="0 0 12 7" aria-hidden="true"><path d="M1 1h10L6 6z" fill="#fff" stroke="#b9b9c0" /></svg>
    </button>
  </div>
);

const NavigationBar = () => (
  <div className="absolute right-[2px] top-[275px] flex h-[312px] w-[49px] flex-col items-center rounded-md border-2 border-[#cdcdcd] bg-[#f6f6f6]">
    <svg width="44" height="308" viewBox="0 0 44 308" aria-label="Navigation bar" fill="none" stroke="#dadada" strokeWidth="2">
      <circle cx="35" cy="7" r="4" />
      <path d="M6 40c0-20 32-20 33-12 1 14 0 28-17 28C12 56 6 48 6 40z" />
      <circle cx="22" cy="40" r="9" />
      <path d="M20 70h6l-3 3zM20 174h6l-3 3zM20 231h6l-3 3z" fill="#c4c4c4" stroke="none" />
      <path d="M2 80h40M2 242h40" strokeWidth="1" />
      <g transform="translate(0 -10)">
        <path d="M14 124c-3-6-7-9-9-12 2-3 6 0 9 4l-2-17c1-3 4-2 4 0l3 12 0-17c1-3 4-3 4 0l1 16 4-14c1-3 4-1 4 1l-2 15 5-8c3-1 3 1 3 3-4 12-7 16-10 21H19z" fill="#fcfcfc" />
      </g>
      <g transform="translate(0 -5)">
        <path d="M5 135l20 19M28 135L5 160M5 142v-7h7M22 135h7v7M5 153v7h7" />
        <circle cx="28" cy="158" r="8" fill="#f6f6f6" />
        <path d="M34 164l7 7" strokeWidth="3" />
      </g>
      <path d="M18 190h8v30h-8zM15 193l7-8 7 8M6 209c-6-10 34-14 32-2-2 6-14 5-26 3M12 205l-4 5 6 4" />
      <path d="M5 249h10v9H5zM18 249h9v9h-9zM30 249h9v9h-9zM4 263h28v20H4z" />
      <path d="M13 267l11 6-11 6z" fill="#cccccc" stroke="none" />
      <circle cx="35" cy="299" r="4" />
    </svg>
  </div>
);

const ViewportControls = () => (
  <div className="absolute right-[10px] top-[7px] flex items-center gap-[10px]">
    <button type="button" aria-label="Minimize drawing"><Svg size={20}><path d="M1 12h22v8H1z" fill="#fff" stroke="#555" strokeWidth="2" /></Svg></button>
    <button type="button" aria-label="Restore drawing"><Svg size={20}><path d="M6 5V2h17v16h-4M1 6h17v16H1zM6 10h7v7H6zM8 12h3v3H8z" fill="#fff" stroke="#555" strokeWidth="2" /></Svg></button>
    <button type="button" aria-label="Close drawing"><Svg size={20}><path d="M2 4h6l4 4 4-4h6v4l-5 4 5 5v4h-6l-4-4-4 4H2v-4l5-5-5-4z" fill="#fff" stroke="#555" strokeWidth="2" /></Svg></button>
  </div>
);

const CommandLine = () => (
  <div className="absolute bottom-0 left-[381px] right-0 flex h-[41px] items-stretch rounded-l-md border-2 border-r-0 border-[#6b6f76]">
    <div className="flex w-[84px] items-center gap-3 bg-[#6b6f76] pl-2">
      <svg width="3" height="28" viewBox="0 0 3 28" aria-hidden="true"><path d="M2 0v28" stroke="#dcdcdc" strokeWidth="2" strokeDasharray="2 2" /></svg>
      <button type="button" aria-label="Close command line"><Svg size={14}><path d="M2 2l20 20M22 2L2 22" stroke="#f1f1f1" strokeWidth="5" /></Svg></button>
      <button type="button" aria-label="Customize" className="pl-[2px]"><Svg size={22}><path d="M1 21l12-12c-1-5 2-9 7-8l-3 4 3 3 4-3c1 5-3 8-8 7L4 24z" fill="#f1f1f1" /></Svg></button>
    </div>
    <div className="flex flex-1 items-center bg-white/70 pl-1">
      <button type="button" aria-label="Recent commands" className="flex items-center gap-1 text-[#777]">
        <Svg size={24}><path d="M1 3h22v18H1z" fill="#fff" stroke="#888" strokeWidth="1.5" /><path d="M1 3h22v5H1z" fill="#888" /><path d="M4 11l4 3-4 3M10 17h6" stroke="#777" strokeWidth="1.5" /></Svg>
        <Caret className="text-[#777]" />
      </button>
      <input
        type="text"
        aria-label="Command"
        placeholder="Type a command"
        className="ml-[10px] min-w-0 flex-1 bg-transparent font-['DejaVu_Sans_Mono',monospace] text-lg italic outline-none placeholder:text-[#8b8b8b]"
      />
    </div>
    {/* history toggle, tucked against the density dialog */}
    <button type="button" aria-label="Command history" className="absolute right-[392px] top-4 text-[#8a8a8a]">
      <svg width="7" height="6" viewBox="0 0 7 6" aria-hidden="true"><path d="M0 6h7V0z" fill="currentColor" /></svg>
    </button>
  </div>
);

const dialogButton = "border font-['Liberation_Sans',sans-serif] text-black bg-[#e1e1e1]";

const KeepSolidsDialog = () => (
  <div role="dialog" aria-labelledby="keep-title" className="absolute left-1/3 top-[52px] ml-[5px] w-[636px] border border-[#555] bg-[#f0f0f0] text-[#1c1c1c]">
    <div className="flex h-[45px] items-center justify-between bg-white pl-[11px] pr-4">
      <h2 id="keep-title" className="text-lg">You've got to make a choice (No maybe!)</h2>
      <button type="button" aria-label="Close"><Svg size={18}><path d="M1 1l22 22M23 1L1 23" stroke="#333" strokeWidth="1.6" /></Svg></button>
    </div>
    <p className="px-3 pt-2 font-['Liberation_Sans',sans-serif] leading-5">Keep solids?</p>
    <div className="flex justify-center gap-[68px] pb-3 pl-1 pt-3">
      <button type="button" className={`${dialogButton} h-[34px] w-[133px] border-[3px] border-[#1f6bb0]`}>Yes</button>
      <button type="button" className={`${dialogButton} h-[34px] w-[133px] border-[#adadad]`}>No</button>
    </div>
  </div>
);

const DensityDialog = () => (
  <form
    role="dialog"
    aria-labelledby="density-title"
    onSubmit={(event) => event.preventDefault()}
    className="absolute bottom-0 right-0 w-[402px] border border-[#777] bg-[#f0f0f0] font-['Liberation_Sans',sans-serif] text-xl text-[#1c1c1c]"
  >
    <div className="flex h-[57px] items-center justify-between bg-white pl-[15px] pr-[21px]">
      <h2 id="density-title" className="font-['Open_Sans',sans-serif] text-[22px]">Density and swell factor</h2>
      <button type="button" aria-label="Close"><Svg size={21}><path d="M1 1l22 22M23 1L1 23" stroke="#333" strokeWidth="1.6" /></Svg></button>
    </div>
    <div className="flex flex-col gap-3 pl-4 pr-[11px] pt-[11px]">
      <div className="flex items-center justify-between">
        <label htmlFor="density">Density (t/m3):</label>
        <input id="density" type="text" defaultValue="4.20" className="h-[39px] w-[83px] border-2 border-[#6f6f6f] bg-white px-px pb-2 text-black outline-none" />
      </div>
      <div className="flex items-center justify-between">
        <label htmlFor="swell">Swell factor:</label>
        <input id="swell" type="text" defaultValue="1.00" className="h-[39px] w-[83px] border-2 border-[#6f6f6f] bg-white px-px pb-2 text-black outline-none" />
      </div>
    </div>
    <div className="flex justify-between pb-[13px] pl-[34px] pr-7 pt-2">
      <button type="submit" className={`${dialogButton} h-[43px] w-[133px] border-[3px] border-[#1f6bb0]`}>OK</button>
      <button type="button" className={`${dialogButton} h-[43px] w-[147px] border-[#adadad]`}>Cancel</button>
    </div>
  </form>
);

const StatusBar = () => (
  <footer className="flex h-[41px] items-start justify-between border-t-2 border-[#4a525c] bg-[#212830]">
    <div className="flex pl-4 text-[#b4bac2]">
      <button type="button" className="h-[26px] rounded-b-lg bg-[#3b4352] px-[17px] font-bold text-white">Model</button>
      <button type="button" className="ml-1 h-[26px] rounded-b-lg bg-[#2c3441] px-[13px]">Layout1</button>
      <button type="button" className="ml-2 h-[26px] rounded-b-lg bg-[#2c3441] px-[13px]">Layout2</button>
      <button type="button" aria-label="New layout" className="ml-3 flex h-[26px] w-8 items-center justify-center rounded-b-lg bg-[#2c3441]">
        <Svg size={13}><path d="M12 1v22M1 12h22" stroke="#a4a9b2" strokeWidth="4" /></Svg>
      </button>
    </div>
    <div className="mr-[392px] flex gap-[6px] pt-[2px] text-[#e4e7ea]">
      <span className="flex h-9 w-[267px] items-center justify-end bg-[#3b4352] pr-2">1869.4340, 1930.0024, 0.0000</span>
      <button type="button" className="h-9 w-[72px] bg-[#3b4352]">MODEL</button>
      <div className="flex h-9 w-24 items-center justify-between bg-[#3b4352] px-[6px]">
        <button type="button" aria-label="Grid"><Svg><path d="M7 1v22M12 1v22M17 1v22M1 7h22M1 12h22M1 17h22" stroke="#c9cdd2" strokeWidth="1.5" /></Svg></button>
        <button type="button" aria-label="Snap"><Svg size={20}><path d="M3 2v22M12 2v22M21 2v22" stroke="#e4e7ea" strokeWidth="3.5" strokeDasharray="3.5 5" /></Svg></button>
        <button type="button" aria-label="Snap settings"><Caret /></button>
      </div>
      <div className="flex h-9 items-center bg-[#3b4352] pl-1">
        <button type="button" aria-label="Ortho"><Svg size={26}><path d="M2 0v22h22M2 15h7v7" stroke="#c9cdd2" strokeWidth="1.5" /></Svg></button>
        <button type="button" aria-label="Polar tracking" className="ml-3"><Svg size={24}><circle cx="11" cy="13" r="9" stroke="#c9cdd2" strokeWidth="1.5" /><path d="M11 13h13M11 13L20 1" stroke="#c9cdd2" strokeWidth="1.5" /></Svg></button>
        <button type="button" aria-label="Polar settings" className="ml-3"><Caret /></button>
        <button type="button" aria-label="Isometric drafting" className="ml-3"><Svg size={24}><path d="M13 0v24" stroke="#7fae9c" strokeWidth="1.5" /><path d="M3 3l19 19" stroke="#b9646a" strokeWidth="1.5" /><circle cx="13" cy="13" r="2" fill="#e4e7ea" /></Svg></button>
        <button type="button" aria-label="Isometric settings" className="ml-3"><Caret /></button>
        <button type="button" aria-label="Object snap tracking" className="ml-[11px] flex h-9 w-[34px] items-center justify-center bg-[#5b86bb]"><Svg><path d="M19 1L3 20h20" stroke="#fff" strokeWidth="2" /><circle cx="12" cy="10" r="3" fill="#fff" /></Svg></button>
        <button type="button" aria-label="Object snap" className="ml-[2px] flex h-9 w-[34px] items-center justify-center bg-[#5b86bb]"><Svg><path d="M7 4h15v18H4V8M1 1h6v6H1z" stroke="#e8f1fb" strokeWidth="2" /></Svg></button>
        <button type="button" aria-label="Object snap settings" className="ml-2 mr-2"><Caret /></button>
        <button type="button" aria-label="Line weight" className="flex h-9 w-[38px] items-center justify-center border-l-2 border-[#2a313c]"><Svg><path d="M0 4h12M0 12h12M0 20h12" stroke="#f0f0f0" strokeWidth="4" /><path d="M12 4h12M12 12h12M12 20h12" stroke="#c9cdd2" strokeWidth="2" /></Svg></button>
      </div>
    </div>
  </footer>
);

const App = () => (
  <div className="relative flex min-h-screen flex-col border-b-4 border-t-[3px] border-white bg-white font-['Open_Sans','Noto_Sans',sans-serif] text-[17px]">
    <div className="flex flex-1">
      <div className="flex min-w-0 flex-1 flex-col bg-[#212830]">
        <TitleBar />
        <RibbonTabs />
        <div className="flex h-[147px] bg-[#3b4352] text-[#d5d9df]">
          {panels.map((panel) => (
            <RibbonPanel key={panel.title} panel={panel} />
          ))}
        </div>
        <DocumentTabs />
        <main className="relative flex-1 bg-white">
          <Scene />
          <p className="absolute left-[2px] top-[6px] text-[#333]">[−][Custom View][Conceptual]</p>
          <ViewportControls />
          <ViewCube />
          <NavigationBar />
          <CommandLine />
          <KeepSolidsDialog />
        </main>
        <StatusBar />
      </div>
      <div className="w-[9px] shrink-0 bg-black" />
    </div>
    <DensityDialog />
  </div>
);

export default App;
